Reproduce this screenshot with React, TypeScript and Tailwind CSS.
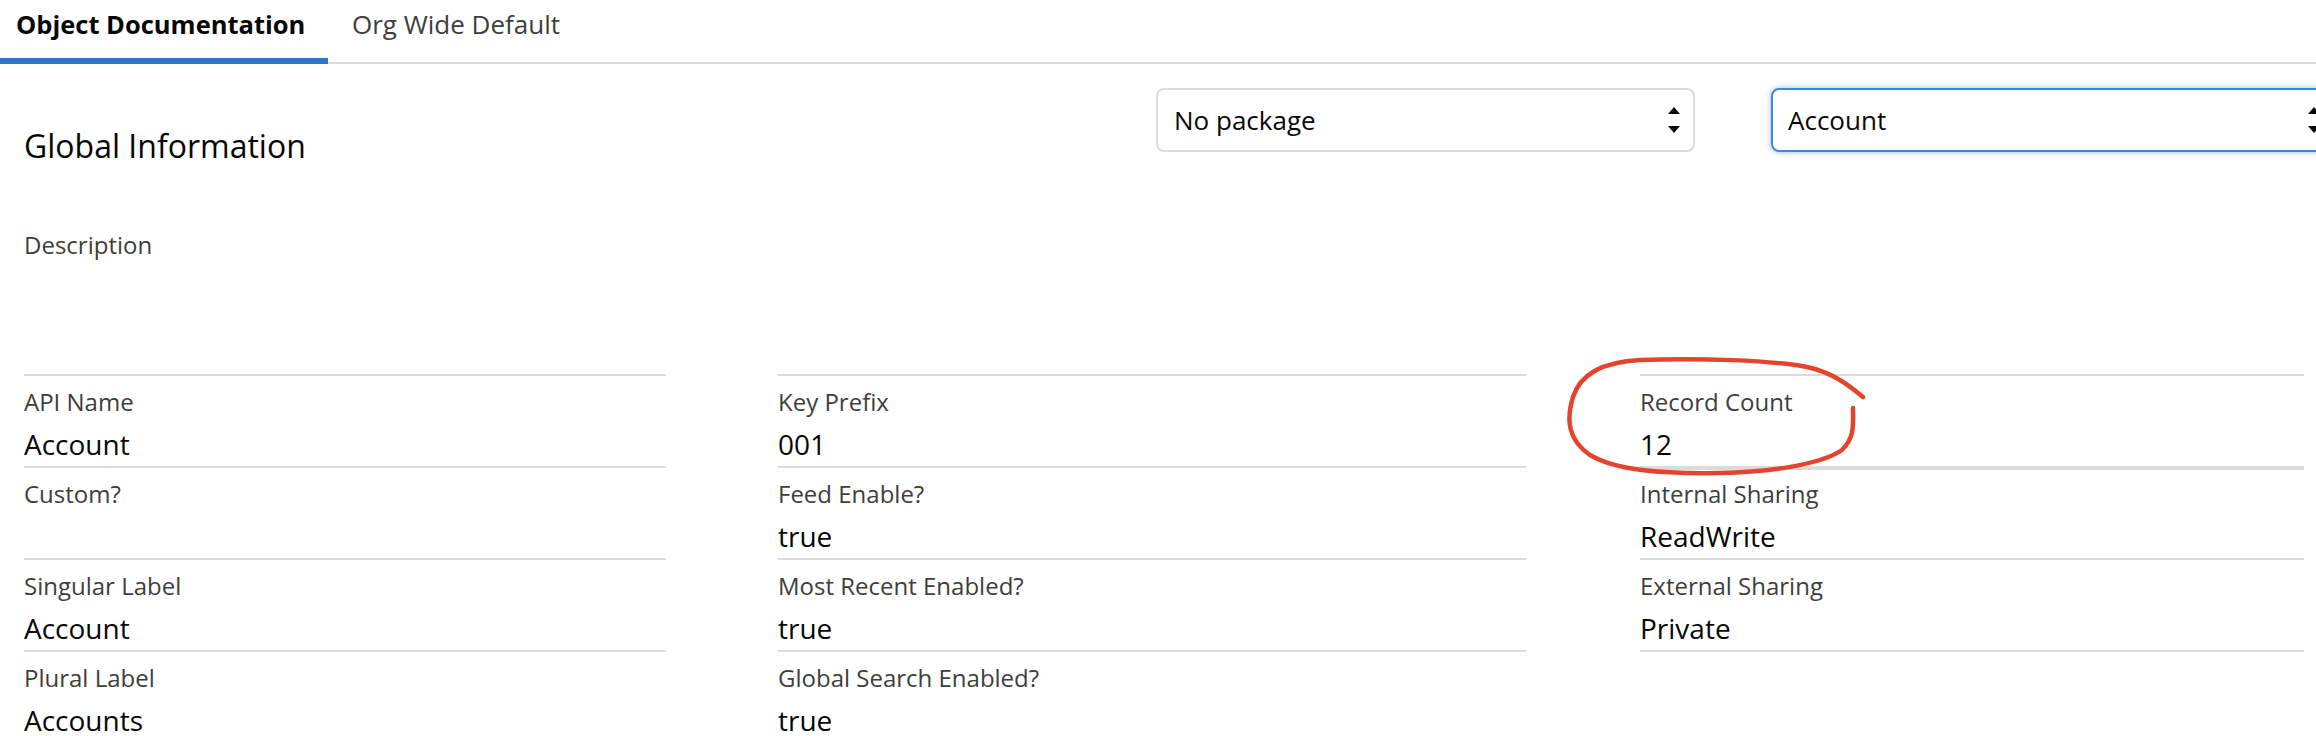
import React from 'react';

type Field = { label: string; value: string; thick?: boolean };

const columns: { width: string; fields: Field[] }[] = [
  {
    width: 'w-[642px]',
    fields: [
      { label: 'API Name', value: 'Account' },
      { label: 'Custom?', value: '' },
      { label: 'Singular Label', value: 'Account' },
      { label: 'Plural Label', value: 'Accounts' },
    ],
  },
  {
    width: 'ml-[112px] w-[748px]',
    fields: [
      { label: 'Key Prefix', value: '001' },
      { label: 'Feed Enable?', value: 'true' },
      { label: 'Most Recent Enabled?', value: 'true' },
      { label: 'Global Search Enabled?', value: 'true' },
    ],
  },
  {
    width: 'ml-[114px] w-[664px]',
    fields: [
      { label: 'Record Count', value: '12' },
      { label: 'Internal Sharing', value: 'ReadWrite', thick: true },
      { label: 'External Sharing', value: 'Private' },
    ],
  },
];

function SelectArrows() {
  return (
    <svg width="12" height="28" viewBox="0 0 12 28" className="shrink-0" aria-hidden="true">
      <polygon points="6,1 12,8 0,8" fill="#080707" />
      <polygon points="0,20 12,20 6,27" fill="#080707" />
    </svg>
  );
}

function FieldRow({ field }: { field: Field }) {
  return (
    <div
      className={`${field.thick ? 'border-t-4 pt-[8px]' : 'border-t-2 pt-[10px]'} border-[#dddbda] pb-[4px]`}
    >
      <div className="text-[24px] leading-[32px] text-[#3e3e3c]">{field.label}</div>
      <div className="mt-[8px] min-h-[36px] text-[28px] leading-[36px] text-[#080707]">{field.value}</div>
    </div>
  );
}

export default function App() {
  return (
    <div className="relative h-[736px] w-[2316px] overflow-hidden bg-white font-['Open_Sans',sans-serif]">
      {/* tabs */}
      <div className="flex h-[64px] border-b-2 border-[#dddbda]">
        <div className="h-[64px] w-[328px] shrink-0 border-b-[6px] border-[#2e74d1] pl-[16px] pt-[6px] text-[25.5px] font-bold leading-[36px] text-[#080707]">
          Object Documentation
        </div>
        <div className="pl-[24px] pt-[6px] text-[26px] leading-[36px] text-[#3e3e3c]">Org Wide Default</div>
      </div>

      {/* header with selects */}
      <div className="flex items-start pt-[24px]">
        <div className="w-[1156px] shrink-0 pl-[24px] pt-[38px] text-[32px] leading-[40px] text-[#080707]">
          Global Information
        </div>
        <div className="flex h-[64px] w-[539px] shrink-0 items-center justify-between rounded-[8px] border-2 border-[#dddbda] pl-[16px] pr-[13px]">
          <span className="text-[26px] leading-[36px] text-[#080707]">No package</span>
          <SelectArrows />
        </div>
        <div className="ml-[76px] flex h-[64px] w-[564px] shrink-0 items-center justify-between rounded-[8px] border-2 border-[#3c87e0] pl-[15px] pr-[13px] shadow-[0_0_6px_rgba(0,112,210,0.45)]">
          <span className="text-[26px] leading-[36px] text-[#080707]">Account</span>
          <SelectArrows />
        </div>
      </div>

      {/* description */}
      <div className="mt-[63px] pl-[24px] text-[24px] leading-[32px] text-[#3e3e3c]">Description</div>

      {/* field grid */}
      <div className="mt-[113px] flex items-start pl-[24px]">
        {columns.map((col, i) => (
          <div key={i} className={`${col.width} shrink-0 border-b-2 border-[#dddbda]`}>
            {col.fields.map((f) => (
              <FieldRow key={f.label} field={f} />
            ))}
          </div>
        ))}
      </div>

      {/* hand-drawn annotation */}
      <svg
        className="pointer-events-none absolute left-0 top-0"
        width="2316"
        height="736"
        viewBox="0 0 2316 736"
        aria-hidden="true"
      >
        <path
          d="M1863,397 C1845,382 1830,372 1807,367 C1770,360 1700,358 1640,360 C1600,362 1580,375 1573,397 C1566,420 1568,440 1590,455 C1615,470 1660,474 1720,473 C1780,472 1825,462 1842,450 C1855,437 1853,425 1853,408"
          fill="none"
          stroke="#e4432d"
          strokeWidth="4.5"
          strokeLinecap="round"
        />
      </svg>
    </div>
  );
}
